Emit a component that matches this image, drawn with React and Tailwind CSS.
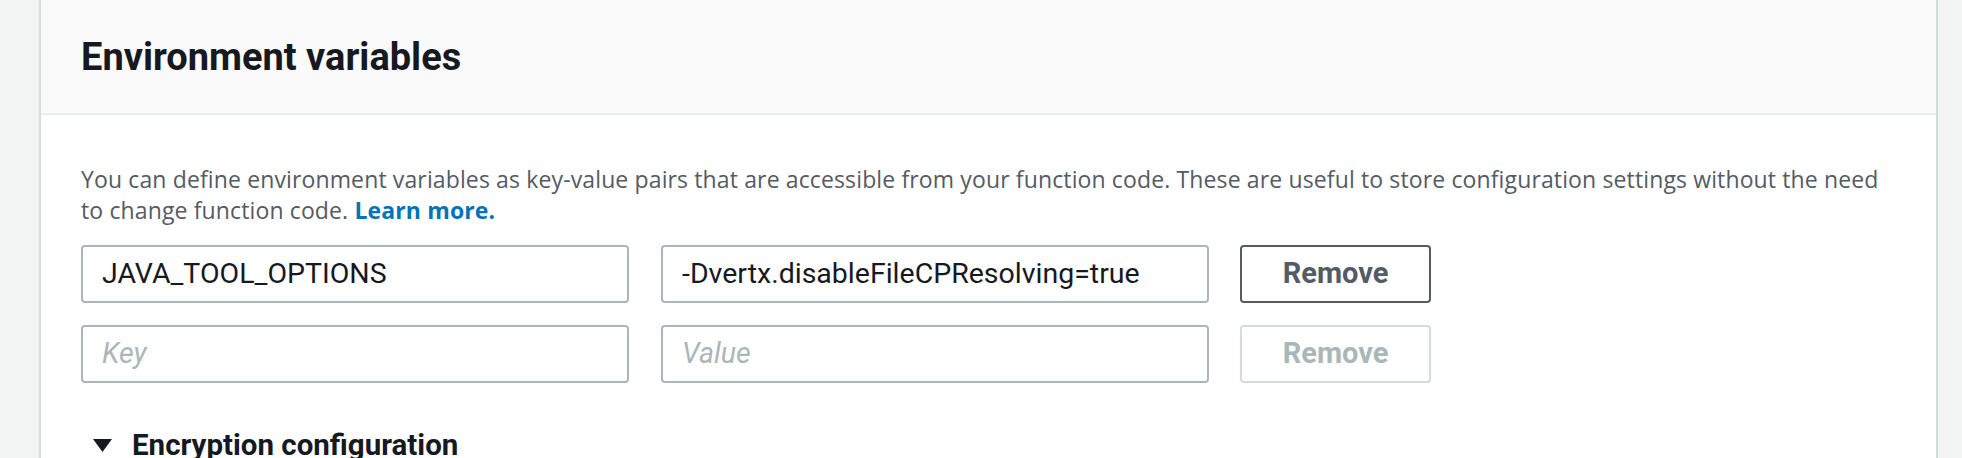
export default function App() {
  const font = { fontFamily: 'Roboto, "Open Sans", sans-serif' };
  const desc = { fontFamily: '"Open Sans", Roboto, sans-serif' };
  return (
    <div className="h-[458px] w-[1962px] overflow-hidden bg-[#f2f3f3] pl-[39px] pr-[24px]" style={font}>
      <div className="flex h-full flex-col border-x-2 border-[#d5dbdb] bg-white">
        <div className="flex h-[115px] shrink-0 items-center border-b-2 border-[#eaeded] bg-[#fafafa] px-[40px]">
          <h2 className="text-[38px] font-bold leading-[48px] text-[#16191f]">Environment variables</h2>
        </div>
        <div className="px-[40px] pt-[49px]">
          <p className="text-[23px] leading-[31px] tracking-[0.13px] text-[#545b64]" style={desc}>
            You can define environment variables as key-value pairs that are accessible from your function code. These are useful to store configuration settings without the need
            <br />
            to change function code.{' '}
            <a className="font-bold text-[#0073bb]">Learn more.</a>
          </p>
          <div className="mt-[19px] flex flex-col gap-[22px]">
            <div className="flex">
              <div className="mr-[32px] flex h-[58px] w-[548px] items-center rounded-[4px] border-2 border-[#aab7b8] px-[19px] text-[28.5px] text-[#16191f]">
                JAVA_TOOL_OPTIONS
              </div>
              <div className="mr-[31px] flex h-[58px] w-[548px] items-center rounded-[4px] border-2 border-[#aab7b8] px-[19px] text-[28.5px] text-[#16191f]">
                -Dvertx.disableFileCPResolving=true
              </div>
              <button className="flex h-[58px] w-[191px] items-center justify-center rounded-[4px] border-2 border-[#545b64] bg-white text-[29px] font-bold text-[#545b64]">
                Remove
              </button>
            </div>
            <div className="flex">
              <div className="mr-[32px] flex h-[58px] w-[548px] items-center rounded-[4px] border-2 border-[#aab7b8] px-[19px] text-[28.5px] italic text-[#aab7b8]">
                Key
              </div>
              <div className="mr-[31px] flex h-[58px] w-[548px] items-center rounded-[4px] border-2 border-[#aab7b8] px-[19px] text-[28.5px] italic text-[#aab7b8]">
                Value
              </div>
              <button className="flex h-[58px] w-[191px] items-center justify-center rounded-[4px] border-2 border-[#d5dbdb] bg-white text-[29px] font-bold text-[#aab7b8]">
                Remove
              </button>
            </div>
          </div>
          <div className="mt-[42px] flex items-center pl-[12px]">
            <svg width="19" height="13" viewBox="0 0 19 13" className="mr-[20px] shrink-0">
              <path d="M0 0 H19 L9.5 13 Z" fill="#16191f" />
            </svg>
            <span className="text-[29.5px] font-bold leading-[40px] text-[#16191f]">Encryption configuration</span>
          </div>
        </div>
      </div>
    </div>
  );
}
